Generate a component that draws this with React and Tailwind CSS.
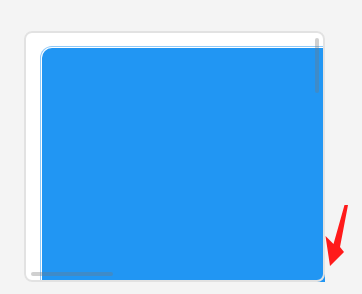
export default function App() {
  return (
    <div className="relative w-[362px] h-[294px] bg-[#f4f4f4] pt-[31px] pl-[24px]">
      <div className="relative w-[301px] h-[251px] rounded-[8px] bg-white">
        <div className="absolute inset-0 overflow-hidden">
          <div className="ml-[18px] mt-[17px] w-[400px] h-[300px] rounded-[10px] bg-[#2196f3] shadow-[0_0_0_1px_#ffffff,0_0_0_2px_#90caf9]" />
        </div>
        <div className="absolute inset-0 rounded-[8px] border-2 border-[#e2e2e2] pointer-events-none" />
        <div className="absolute left-[291px] top-[7px] w-[4px] h-[55px] rounded-full bg-[rgba(120,120,120,0.35)]" />
        <div className="absolute left-[7px] top-[241px] w-[82px] h-[4px] rounded-full bg-[rgba(120,120,120,0.35)]" />
      </div>
      <svg className="absolute left-0 top-0" width="362" height="294" viewBox="0 0 362 294">
        <polygon points="344.5,205 348,205 340,247 344,252 330,266 325.5,236 333.5,244" fill="#ff1a1a" />
      </svg>
    </div>
  );
}
